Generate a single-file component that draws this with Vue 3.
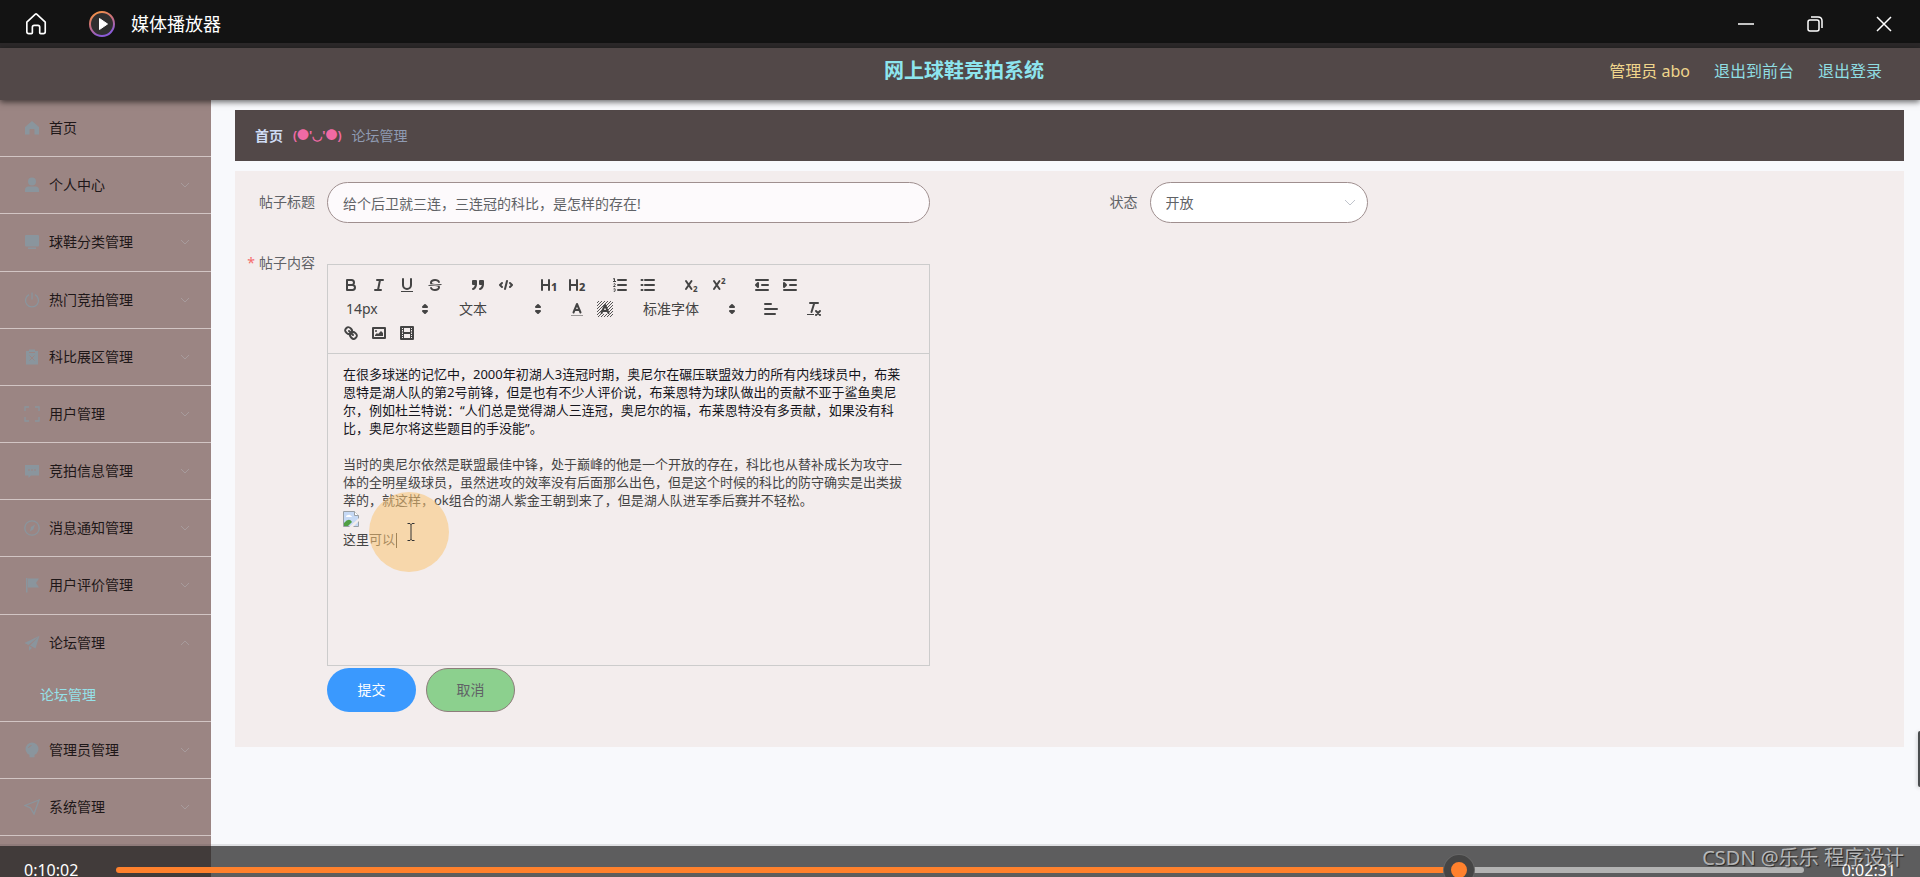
<script setup>
import { ref, computed } from 'vue'

const menu = [
  { label: '首页', icon: 'home' },
  { label: '个人中心', icon: 'user', children: [] },
  { label: '球鞋分类管理', icon: 'monitor', children: [] },
  { label: '热门竞拍管理', icon: 'power', children: [] },
  { label: '科比展区管理', icon: 'clipboard', children: [] },
  { label: '用户管理', icon: 'frame', children: [] },
  { label: '竞拍信息管理', icon: 'chat', children: [] },
  { label: '消息通知管理', icon: 'compass', children: [] },
  { label: '用户评价管理', icon: 'flag', children: [] },
  { label: '论坛管理', icon: 'send', children: ['论坛管理'] },
  { label: '管理员管理', icon: 'bulb', children: [] },
  { label: '系统管理', icon: 'position', children: [] }
]

const menuIcons = {
  home: '<path fill="currentColor" d="M8 1 1 7v7.500h4.500V10a1 1 0 0 1 1-1h3a1 1 0 0 1 1 1v4.500H15V7z"/>',
  user: '<circle cx="8" cy="4.500" r="4" fill="currentColor"/><path fill="currentColor" d="M1 15v-2a3.500 3.500 0 0 1 3.500-3.500h7A3.500 3.500 0 0 1 15 13v2z"/>',
  monitor: '<rect x="1" y="1" width="14" height="11.500" rx="1" fill="currentColor"/><path fill="currentColor" d="M4 13.500h8V15H4z"/>',
  power: '<path d="M5 2.700a6.500 6.500 0 1 0 6 0M8 .5v7" fill="none" stroke="currentColor" stroke-width="1.300"/>',
  clipboard: '<path fill="currentColor" d="M2 2h3V.5h6V2h3v13.500H2z"/><path d="m5.500 6.500 5 5m0-5-5 5M5 3.500h6" stroke="#9b8583" fill="none"/>',
  frame: '<path d="M1 5V1h4m6 0h4v4m0 6v4h-4m-6 0H1v-4" fill="none" stroke="currentColor" stroke-width="1.300"/>',
  chat: '<path fill="currentColor" d="M1 2h14v10.500H7L4.500 15v-2.500H1z"/><path d="M4.300 7h1.400m1.600 0h1.400m1.600 0h1.400" stroke="#9b8583" stroke-width="1.500"/>',
  compass: '<circle cx="8" cy="8" r="7.200" fill="none" stroke="currentColor" stroke-width="1.300"/><path fill="currentColor" d="M11 4.500 9.300 9.500 6 11.500 7 7z"/>',
  flag: '<path fill="currentColor" d="M2 1h1.500v14.500H2zM4 1.500h11l-3 4.500 3 4.500H4z"/>',
  send: '<path fill="currentColor" d="M15.500.8.5 8l4 2zM15.500.8 6 10.500l5.500 3zM5 11l3 2-3 2.700z"/>',
  bulb: '<circle cx="8" cy="7" r="6.500" fill="currentColor"/><path fill="currentColor" d="M5.500 13h5v2.300h-5z"/><path d="M4.500 6a3.500 3.500 0 0 1 3-2.500" fill="none" stroke="#9b8583"/>',
  position: '<path d="M15 1 1 6.500l5.500 2.500L10 15z" fill="none" stroke="currentColor" stroke-width="1.300"/>'
}

const b = (name, svg) => ({ name, svg })
const toolbar = [
  [
    { items: [
      b('粗体', '<path class="s" d="M5 4h4.500a2.500 2.500 0 0 1 0 5H5zM5 9h5.500a2.500 2.500 0 0 1 0 5H5z"/>'),
      b('斜体', '<path class="s" d="M7 4h6M5 14h6M8 14l2-10"/>'),
      b('下划线', '<path class="s" d="M5 3v6a4 4 0 0 0 8 0V3"/><rect class="f" x="3" y="15" width="12" height="1"/>'),
      b('删除线', '<path class="t" d="M15.500 8.500l-13 1"/><path class="f" d="M9.007 8C6.542 7.791 6 7.519 6 6.500 6 5.792 7.283 5 9 5c1.571 0 2.765.679 2.969 1.309a1 1 0 0 0 1.900-.617C13.356 4.106 11.354 3 9 3 6.200 3 4 4.538 4 6.500a3.200 3.200 0 0 0 .5 1.843zM8.984 10C11.457 10.208 12 10.479 12 11.500c0 .708-1.283 1.500-3 1.500-1.571 0-2.765-.679-2.969-1.309a1 1 0 1 0-1.900.617C4.644 13.894 6.646 15 9 15c2.800 0 5-1.538 5-3.500a3.200 3.200 0 0 0-.5-1.843z"/>')
    ] },
    { items: [
      b('引用', '<path class="s f" d="M4 5h3v3H4zM11 5h3v3h-3z"/><path class="s f" d="M7 8c0 4.031-3 5-3 5M14 8c0 4.031-3 5-3 5"/>'),
      b('代码', '<path class="s" d="M5 7 3 9l2 2M13 7l2 2-2 2M10 5 8 13"/>')
    ] },
    { items: [
      b('标题一', '<path class="s" d="M2 4v10M9 4v10M2 9h7"/><text x="11" y="15" class="n">1</text>'),
      b('标题二', '<path class="s" d="M2 4v10M9 4v10M2 9h7"/><text x="11" y="15" class="n">2</text>')
    ] },
    { items: [
      b('有序列表', '<path class="s" d="M7 4h8M7 9h8M7 14h8"/><path class="t" d="M2 3l1.500-.5v3M2 5.500h3M2.500 8.200c.5-1 2-.7 1.800.2-.2.8-1.800 1.500-1.800 2.100h2M2.500 13.100c.5-.8 1.900-.6 1.800.2 0 .5-.6.7-.6.7s.7.200.6.8c-.1.8-1.500.9-1.800.1"/>'),
      b('无序列表', '<path class="s" d="M6 4h9M6 9h9M6 14h9M2.500 4h1M2.500 9h1M2.500 14h1"/>')
    ] },
    { items: [
      b('下标', '<path class="s" d="M4 5l5.500 8M9.500 5 4 13"/><text x="11" y="16" class="x">2</text>'),
      b('上标', '<path class="s" d="M4 5l5.500 8M9.500 5 4 13"/><text x="11" y="8" class="x">2</text>')
    ] },
    { items: [
      b('减少缩进', '<path class="s" d="M3 14h12M3 4h12M9 9h6"/><path class="s f" d="M5 7v4L3 9z"/>'),
      b('增加缩进', '<path class="s" d="M3 14h12M3 4h12M9 9h6"/><path class="s f" d="M3 7v4l2-2z"/>')
    ] }
  ],
  [
    { select: '14px', name: '字号' },
    { select: '文本', name: '段落' },
    { items: [
      b('文字颜色', '<path d="M3 15.500h12" stroke="#444" opacity=".5"/><path class="s" d="M5.500 12.500 9 4l3.500 8.500M6.400 10h5.200"/>'),
      b('背景颜色', '<path d="M1 3l2-2M1 6l5-5M1 9l8-8M1 12l11-11M1 15 15 1M2 17 17 2M5 17 17 5M8 17l9-9M11 17l6-6M14 17l3-3" stroke="#444" stroke-width=".9"/><path d="M4.500 14 9 4l4.500 10z" fill="#f3eded"/><path class="s" d="M5.500 13 9 5l3.500 8M6.400 11h5.200"/>')
    ] },
    { select: '标准字体', name: '字体', wide: true },
    { items: [b('对齐', '<path class="s" d="M3 9h12M3 14h10M3 4h6"/>')] },
    { items: [b('清除格式', '<path class="s" d="M5 3h8M6.500 12 9.300 3M11 11l4 4M15 11l-4 4"/><rect class="f" x="2" y="14" width="7" height="1"/>')] }
  ],
  [
    { items: [
      b('链接', '<path class="s" d="M7 7l4 4M8.900 4.577a3.476 3.476 0 0 1 .36 4.679A3.476 3.476 0 0 1 4.577 8.900C3.185 7.500 2.035 6.400 4.217 4.217S7.500 3.185 8.900 4.577zM13.423 9.100a3.476 3.476 0 0 0-4.679-.36 3.476 3.476 0 0 0 .36 4.679c1.392 1.392 2.500 2.542 4.679.36S14.815 10.500 13.423 9.100z"/>'),
      b('图片', '<rect class="s" x="3" y="4" width="12" height="10"/><circle class="f" cx="6" cy="7" r="1"/><path class="f" d="M5 12v-1l2-2 1 1 3-3 2 2v3z"/>'),
      b('视频', '<rect class="s" x="3" y="3" width="12" height="12"/><path class="t" d="M5.500 3v12M12.500 3v12M3 5.500h3M3 8h3M3 10.500h3M3 12.500h3M12 5.500h3M12 8h3M12 10.500h3M12 12.500h3"/><path class="s" d="M6 9h6"/>')
    ] }
  ]
]

const title = ref('给个后卫就三连，三连冠的科比，是怎样的存在!')
const status = ref('开放')
const position = ref(801)
const played = computed(() => ({ '--played': position.value / 10 + '%' }))
</script>

<template>
  <div class="window">
    <div class="titlebar">
      <button class="home" aria-label="主页">
        <svg width="24" height="24" viewBox="0 0 24 24"><path d="M2 10.500 11 2q1-.8 2 0l9 8.500V21q0 2-2 2h-3q-1 0-1-1v-6q0-2-2-2h-4q-2 0-2 2v6q0 1-1 1H4q-2 0-2-2z" transform="translate(1 .5) scale(.92)" fill="none" stroke="#fff" stroke-width="1.800" /></svg>
      </button>
      <svg class="logo" width="26" height="26" viewBox="0 0 26 26">
        <defs><linearGradient id="ring" x1="0" y1="0" x2=".4" y2="1"><stop offset="0" stop-color="#ff9a3c" /><stop offset=".5" stop-color="#c9707c" /><stop offset="1" stop-color="#8b5bd6" /></linearGradient></defs>
        <circle cx="13" cy="13" r="12" fill="#2f2f2f" stroke="url(#ring)" stroke-width="2" />
        <path d="M10.500 7.500v11l8-5.500z" fill="#fff" stroke="#fff" stroke-linejoin="round" />
      </svg>
      <span class="appname">媒体播放器</span>
      <div class="controls">
        <button aria-label="最小化"><svg width="16" height="16"><path d="M0 8h16" stroke="#fff" stroke-width="1.500" /></svg></button>
        <button aria-label="还原"><svg width="16" height="16"><rect x="1" y="4" width="11" height="11" rx="2" fill="none" stroke="#fff" stroke-width="1.500" /><path d="M4 1h7q4 0 4 4v7" fill="none" stroke="#fff" stroke-width="1.500" /></svg></button>
        <button aria-label="关闭"><svg width="16" height="16"><path d="M1 1l14 14M15 1 1 15" stroke="#fff" stroke-width="1.500" /></svg></button>
      </div>
    </div>

    <header class="header">
      <h1>网上球鞋竞拍系统</h1>
      <div class="account">
        <span class="who">管理员 abo</span>
        <a href="#front">退出到前台</a>
        <a href="#logout">退出登录</a>
      </div>
    </header>

    <div class="body">
      <nav class="sidebar">
        <div v-for="m in menu" :key="m.label" class="group" :class="{ open: m.children && m.children.length }">
          <button class="item">
            <svg class="micon" width="16" height="16" viewBox="0 0 16 16" v-html="menuIcons[m.icon]" />
            <span>{{ m.label }}</span>
            <svg v-if="m.children" class="chev" width="10" height="6" viewBox="0 0 10 6"><path :d="m.children.length ? 'M1 5l4-4 4 4' : 'M1 1l4 4 4-4'" fill="none" stroke="currentColor" /></svg>
          </button>
          <a v-for="c in m.children" :key="c" class="sub" href="#forum">{{ c }}</a>
        </div>
      </nav>

      <main class="main">
        <div class="crumbs">
          <a href="#home">首页</a>
          <span class="face">(●'◡'●)</span>
          <span>论坛管理</span>
        </div>

        <form class="card" @submit.prevent>
          <div class="row">
            <div class="field">
              <label for="title">帖子标题</label>
              <input id="title" v-model="title" class="control" type="text">
            </div>
            <div class="field">
              <label for="status">状态</label>
              <div class="selectbox">
                <select id="status" v-model="status" class="control"><option>开放</option><option>关闭</option></select>
                <svg width="12" height="8" viewBox="0 0 12 8"><path d="M1 1l5 5 5-5" fill="none" stroke="#c0c4cc" /></svg>
              </div>
            </div>
          </div>

          <div class="row">
            <div class="field top">
              <label id="content-label"><i>*</i>帖子内容</label>
              <div class="editor">
                <div class="toolbar">
                  <div v-for="(line, li) in toolbar" :key="li" class="tools">
                    <div v-for="(g, gi) in line" :key="gi" class="formats">
                      <div v-if="g.select" class="picker" :class="{ wide: g.wide }">
                        <select :aria-label="g.name"><option>{{ g.select }}</option></select>
                        <svg width="18" height="18" viewBox="0 0 18 18"><path class="s f" d="M7 11l2 2 2-2zM7 7l2-2 2 2z" /></svg>
                      </div>
                      <template v-else>
                        <button v-for="t in g.items" :key="t.name" type="button" :aria-label="t.name">
                          <svg width="18" height="18" viewBox="0 0 18 18" v-html="t.svg" />
                        </button>
                      </template>
                    </div>
                  </div>
                </div>
                <div class="content" contenteditable="true" spellcheck="false" role="textbox" aria-labelledby="content-label">
                  <p class="dark">在很多球迷的记忆中，2000年初湖人3连冠时期，奥尼尔在碾压联盟效力的所有内线球员中，布莱<br>恩特是湖人队的第2号前锋，但是也有不少人评价说，布莱恩特为球队做出的贡献不亚于鲨鱼奥尼<br>尔，例如杜兰特说：“人们总是觉得湖人三连冠，奥尼尔的福，布莱恩特没有多贡献，如果没有科<br>比，奥尼尔将这些题目的手没能”。</p>
                  <p><br></p>
                  <p>当时的奥尼尔依然是联盟最佳中锋，处于巅峰的他是一个开放的存在，科比也从替补成长为攻守一<br>体的全明星级球员，虽然进攻的效率没有后面那么出色，但是这个时候的科比的防守确实是出类拔<br>萃的，就这样，ok组合的湖人紫金王朝到来了，但是湖人队进军季后赛并不轻松。</p>
                  <p class="pic"><svg width="16" height="16" viewBox="0 0 16 16"><path d="M.5.5h11l4 4v11H.5z" fill="#c6d9f5" stroke="#9aa0a6" /><path d="M11.500.5v4h4" fill="#fff" stroke="#9aa0a6" /><path d="M3 6q0-2 2-2 2-1 3 1 1 0 1 1z" fill="#fff" /><path d="M1 15v-3q5-6 8-1l-4 4z" fill="#4f9f43" /><path d="M6 16 16 7v3l-6 6z" fill="#f3eded" /></svg></p>
                  <p>这里可以<span class="caret" /></p>
                </div>
                <div class="spot">
                  <svg width="8" height="18" viewBox="0 0 8 18"><path d="M.5.500h2.500l1 1 1-1h2.500M.5 17.500h2.500l1-1 1 1h2.500M4 1v16" fill="none" stroke="#333" /></svg>
                </div>
              </div>
            </div>
          </div>

          <div class="actions">
            <button type="submit" class="submit">提交</button>
            <button type="button" class="cancel">取消</button>
          </div>
        </form>
      </main>
    </div>

    <div class="dock" />

    <div class="player">
      <div class="strip">
        <span>0:10:02</span>
        <input v-model.number="position" type="range" min="0" max="1000" aria-label="播放进度" :style="played">
        <span>0:02:31</span>
      </div>
      <div class="mark">CSDN @乐乐 程序设计</div>
    </div>
  </div>
</template>

<style>
body { background: #f8f9fc; }
</style>

<style scoped>
* { box-sizing: border-box; }
.window {
  position: relative;
  min-height: 100vh;
  display: flex;
  flex-direction: column;
  overflow: hidden;
  background: #f8f9fc;
  color: #606266;
  font: 14px/20px "Noto Sans", "Noto Sans CJK SC", sans-serif;
}
button, input, select { font: inherit; color: inherit; margin: 0; }
button { border: 0; padding: 0; background: none; cursor: pointer; }
a { text-decoration: none; }
svg { display: block; }

.titlebar {
  height: 48px;
  display: flex;
  align-items: center;
  padding: 0 2px 0 24px;
  background: #131313;
  box-shadow: inset 0 -5px #2b2829;
  color: #fff;
}
.logo { margin: 0 16px 0 41px; }
.appname { font-size: 18px; line-height: 24px; }
.controls { margin-left: auto; display: flex; }
.controls button { width: 69px; height: 43px; display: grid; place-items: center; }

.header {
  position: relative;
  z-index: 2;
  height: 52px;
  display: grid;
  grid-template-columns: 1fr auto 1fr;
  align-items: center;
  padding: 0 38px 6px 46px;
  background: #524848;
  box-shadow: 0 2px 6px rgba(0, 0, 0, .6);
}
.header h1 { grid-column: 2; margin: 0; font-size: 20px; line-height: 28px; color: #8de5ee; }
.account { display: flex; justify-content: flex-end; gap: 24px; font-size: 16px; line-height: 24px; }
.account a { color: #8fdde2; }
.who { color: #efd58c; }

.body { flex: 1; display: flex; }
.sidebar {
  width: 211px;
  display: flex;
  flex-direction: column;
  padding-bottom: 41px;
  background: #9b8583;
}
.group { flex: 1 0 auto; height: 57px; display: flex; flex-direction: column; border-bottom: 1px solid #d2c5c4; }
.group.open { height: 107px; }
.item {
  flex: 1;
  display: flex;
  align-items: center;
  gap: 9px;
  padding: 0 21px 0 24px;
  color: #1e1718;
  text-align: left;
}
.micon { color: #8a959d; }
.chev { margin-left: auto; color: #a79b9c; }
.sub { height: 50px; padding: 4px 0 0 40px; line-height: 40px; color: #95e2ea; }

.main { flex: 1; padding: 10px 16px 0 24px; }
.crumbs {
  height: 51px;
  display: flex;
  align-items: center;
  gap: 10px;
  padding: 0 20px;
  background: #524848;
  color: #8f9bb3;
}
.crumbs a { color: #cfdcf5; font-weight: 700; }
.face { font-size: 12px; color: #f06aa4; font-weight: 700; }

.card { margin-top: 10px; padding: 11px 12px 35px; background: #f3eded; }
.row { display: grid; grid-template-columns: 1fr 1fr; }
.row + .row { margin-top: 20px; }
.field { display: flex; }
.field label { flex: none; width: 80px; padding-right: 12px; text-align: right; line-height: 40px; white-space: nowrap; }
.field label i { margin-right: 4px; font-style: normal; color: #f56c6c; }
.control {
  width: 100%;
  max-width: 603px;
  height: 41px;
  padding: 0 15px;
  border: 1px solid #9f8f8f;
  border-radius: 21px;
  background: #fdfafc;
  outline: 0;
}
select { appearance: none; }
.selectbox { position: relative; width: 218px; }
.selectbox .control { background: #fff; }
.selectbox svg { position: absolute; right: 12px; top: 17px; pointer-events: none; }

.editor { position: relative; width: 603px; margin-top: 21px; border: 1px solid #ccc; }
.toolbar { padding: 8px; border-bottom: 1px solid #ccc; }
.tools, .formats { display: flex; }
.tools { gap: 15px; }
.formats button { width: 28px; height: 24px; padding: 3px 4px 3px 6px; }
.picker { position: relative; width: 98px; height: 24px; }
.picker.wide { width: 108px; }
.picker select { width: 100%; height: 24px; padding: 0 10px; border: 0; background: none; color: #444; }
.picker svg { position: absolute; right: 0; top: 3px; pointer-events: none; }
.tools :deep(.s), .tools .s { fill: none; stroke: #444; stroke-width: 2; stroke-linecap: round; stroke-linejoin: round; }
.tools :deep(.t) { fill: none; stroke: #444; stroke-width: 1; }
.tools :deep(.f), .tools .f { fill: #444; }
.tools :deep(.n) { fill: #444; font: 800 11px "Noto Sans", sans-serif; }
.tools :deep(.x) { fill: #444; font: 700 8px "Noto Sans", sans-serif; }
.content { height: 311px; padding: 11px 15px; font-size: 13px; line-height: 18px; color: #444; outline: 0; white-space: nowrap; }
.content p { margin: 0; }
.content .dark { color: #15151c; }
.content .pic { height: 21px; padding-top: 2px; }
.caret { display: inline-block; width: 1px; height: 15px; margin-left: 1px; vertical-align: middle; background: #333; }
.spot {
  position: absolute;
  left: 41px;
  top: 227px;
  width: 80px;
  height: 80px;
  display: grid;
  place-items: center;
  padding-left: 4px;
  border-radius: 50%;
  background: rgba(249, 196, 117, .55);
  pointer-events: none;
}

.actions { display: flex; gap: 10px; margin-top: 2px; padding-left: 80px; }
.actions button { width: 89px; height: 44px; border-radius: 22px; }
.submit { background: #3a99fe; color: #fff; }
.actions .cancel { border: 1px solid #8d7d7b; background: #8cd08e; }

.dock { position: absolute; right: 0; bottom: 90px; width: 2px; height: 56px; border-radius: 2px 0 0 2px; background: #4a4d4f; box-shadow: 0 1px 4px rgba(0, 0, 0, .3); }

.player {
  position: absolute;
  z-index: 3;
  left: 0;
  right: 0;
  bottom: 0;
  height: 33px;
  overflow: hidden;
  border-top: 2px solid rgba(60, 60, 60, .12);
  background: rgba(27, 27, 27, .7) padding-box;
  color: #fff;
}
.strip { height: 48px; display: flex; align-items: center; justify-content: space-between; padding: 0 24px; font-size: 16px; line-height: 24px; }
.strip input {
  appearance: none;
  flex: 1;
  height: 6px;
  margin: 0 38px;
  border-radius: 3px;
  background: linear-gradient(90deg, #ff812d var(--played), #b3b3b3 var(--played));
}
.strip input::-webkit-slider-thumb { appearance: none; width: 30px; height: 30px; border: 7px solid #454545; border-radius: 50%; background: #ff812d; box-shadow: 0 0 0 1px #666; }
.mark { position: absolute; right: 16px; top: 0; font-size: 20px; line-height: 24px; color: rgba(255, 255, 255, .62); text-shadow: 1px 1px 1px rgba(0, 0, 0, .6); }
</style>
